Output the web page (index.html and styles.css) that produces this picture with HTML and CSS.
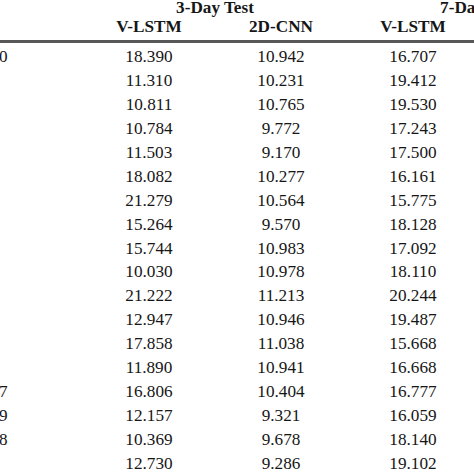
FILE: index.html
```html
<!DOCTYPE html>
<html lang="en">
<head>
<meta charset="utf-8">
<title>Test results</title>
<link rel="stylesheet" href="styles.css">
</head>
<body>
<div class="table">
  <div class="row head1">
    <div class="lab"></div>
    <div class="span">3-Day Test</div>
    <div class="span">7-Day Test</div>
  </div>
  <div class="row head2">
    <div class="lab"></div>
    <div class="cell">V-LSTM</div>
    <div class="cell">2D-CNN</div>
    <div class="cell">V-LSTM</div>
    <div class="cell">2D-CNN</div>
  </div>
  <div class="body">
    <div class="row"><div class="lab">Station 10</div><div class="cell">18.390</div><div class="cell">10.942</div><div class="cell">16.707</div></div>
    <div class="row"><div class="lab">Site 1</div><div class="cell">11.310</div><div class="cell">10.231</div><div class="cell">19.412</div></div>
    <div class="row"><div class="lab">Site 2</div><div class="cell">10.811</div><div class="cell">10.765</div><div class="cell">19.530</div></div>
    <div class="row"><div class="lab">Site 3</div><div class="cell">10.784</div><div class="cell">9.772</div><div class="cell">17.243</div></div>
    <div class="row"><div class="lab">Site 4</div><div class="cell">11.503</div><div class="cell">9.170</div><div class="cell">17.500</div></div>
    <div class="row"><div class="lab">Site 5</div><div class="cell">18.082</div><div class="cell">10.277</div><div class="cell">16.161</div></div>
    <div class="row"><div class="lab">Site 6</div><div class="cell">21.279</div><div class="cell">10.564</div><div class="cell">15.775</div></div>
    <div class="row"><div class="lab">Site 7</div><div class="cell">15.264</div><div class="cell">9.570</div><div class="cell">18.128</div></div>
    <div class="row"><div class="lab">Site 8</div><div class="cell">15.744</div><div class="cell">10.983</div><div class="cell">17.092</div></div>
    <div class="row"><div class="lab">Site 9</div><div class="cell">10.030</div><div class="cell">10.978</div><div class="cell">18.110</div></div>
    <div class="row"><div class="lab">Site 10</div><div class="cell">21.222</div><div class="cell">11.213</div><div class="cell">20.244</div></div>
    <div class="row"><div class="lab">Site 11</div><div class="cell">12.947</div><div class="cell">10.946</div><div class="cell">19.487</div></div>
    <div class="row"><div class="lab">Site 12</div><div class="cell">17.858</div><div class="cell">11.038</div><div class="cell">15.668</div></div>
    <div class="row"><div class="lab">Site 13</div><div class="cell">11.890</div><div class="cell">10.941</div><div class="cell">16.668</div></div>
    <div class="row"><div class="lab">Station 17</div><div class="cell">16.806</div><div class="cell">10.404</div><div class="cell">16.777</div></div>
    <div class="row"><div class="lab">Station 19</div><div class="cell">12.157</div><div class="cell">9.321</div><div class="cell">16.059</div></div>
    <div class="row"><div class="lab">Station 18</div><div class="cell">10.369</div><div class="cell">9.678</div><div class="cell">18.140</div></div>
    <div class="row"><div class="lab">Site 14</div><div class="cell">12.730</div><div class="cell">9.286</div><div class="cell">19.102</div></div>
  </div>
</div>
</body>
</html>
```
FILE: styles.css
```css
html, body {
  margin: 0;
  padding: 0;
  background: #ffffff;
  overflow: hidden;
  width: 474px;
  height: 474px;
}
.table {
  margin-left: -90px;
  width: 900px;
  font-family: "Liberation Serif", "Times New Roman", serif;
  font-size: 17.2px;
  color: #161616;
}
.row {
  display: flex;
  align-items: center;
  height: 23.9px;
  white-space: nowrap;
}
.lab {
  flex: 0 0 173px;
  box-sizing: border-box;
  padding-left: 27.4px;
  text-align: left;
}
.cell {
  flex: 0 0 132px;
  text-align: center;
}
.span {
  flex: 0 0 264px;
  text-align: center;
}
.head1 {
  height: 16px;
  line-height: 16px;
  font-weight: bold;
}
.head2 {
  height: 24px;
  font-weight: bold;
  border-bottom: 3px solid #585858;
  align-items: flex-start;
}
.head2 .cell {
  line-height: 22px;
}
.body {
  padding-top: 2.5px;
}
```
